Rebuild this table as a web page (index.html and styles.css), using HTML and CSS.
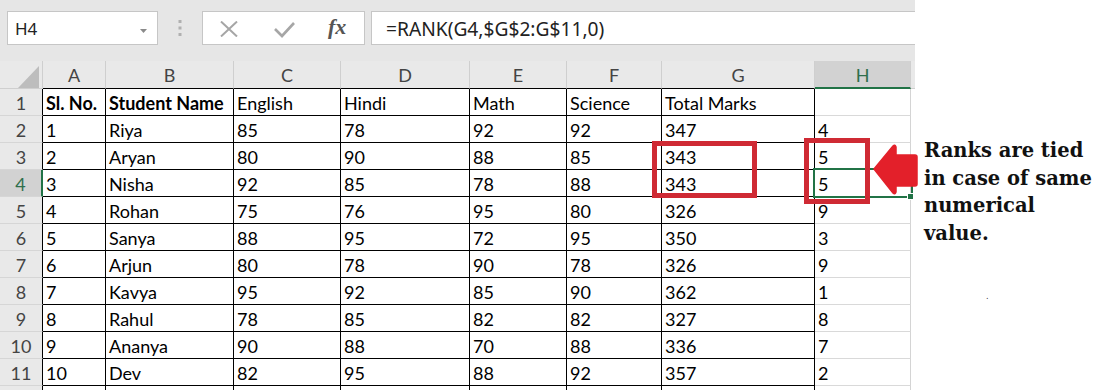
FILE: index.html
```html
<!DOCTYPE html>
<html>
<head>
<meta charset="utf-8">
<link rel="stylesheet" href="styles.css">
</head>
<body>
<div class="wrap">
  <div class="excel">
    <div class="fbar">
      <div class="namebox">
        <span class="nb-text">H4</span>
        <svg class="dd" width="7" height="4" viewBox="0 0 7 4"><path d="M0 0 L7 0 L3.5 4 Z" fill="#8a8a8a"/></svg>
      </div>
      <svg class="grip" width="4" height="18" viewBox="0 0 4 18">
        <rect x="0.5" y="1" width="3" height="3" fill="#b0b0b0"/>
        <rect x="0.5" y="7.5" width="3" height="3" fill="#b0b0b0"/>
        <rect x="0.5" y="14" width="3" height="3" fill="#b0b0b0"/>
      </svg>
      <div class="fxbox">
        <svg class="ico-x" width="18" height="16" viewBox="0 0 18 16"><path d="M1 0.5 L17 15.5 M17 0.5 L1 15.5" stroke="#a6a6a6" stroke-width="2" fill="none"/></svg>
        <svg class="ico-ok" width="21" height="16" viewBox="0 0 21 16"><path d="M1 7 L8 14 L20 1" stroke="#a6a6a6" stroke-width="2.6" fill="none"/></svg>
        <span class="fx">fx</span>
      </div>
      <div class="formula">=RANK(G4,$G$2:G$11,0)</div>
    </div>
    <div class="grid">
      <div class="corner"><div class="tri"></div></div>
      <div class="ch">A</div><div class="ch">B</div><div class="ch">C</div><div class="ch">D</div><div class="ch">E</div><div class="ch">F</div><div class="ch">G</div><div class="ch cur">H</div><div class="ch fill"></div>

      <div class="rh">1</div><div class="c b">Sl. No.</div><div class="c b">Student Name</div><div class="c">English</div><div class="c">Hindi</div><div class="c">Math</div><div class="c">Science</div><div class="c">Total Marks</div><div class="h"></div><div class="f"></div>
      <div class="rh">2</div><div class="c">1</div><div class="c">Riya</div><div class="c">85</div><div class="c">78</div><div class="c">92</div><div class="c">92</div><div class="c">347</div><div class="h">4</div><div class="f"></div>
      <div class="rh">3</div><div class="c">2</div><div class="c">Aryan</div><div class="c">80</div><div class="c">90</div><div class="c">88</div><div class="c">85</div><div class="c">343</div><div class="h">5</div><div class="f"></div>
      <div class="rh cur">4</div><div class="c">3</div><div class="c">Nisha</div><div class="c">92</div><div class="c">85</div><div class="c">78</div><div class="c">88</div><div class="c">343</div><div class="h">5</div><div class="f"></div>
      <div class="rh">5</div><div class="c">4</div><div class="c">Rohan</div><div class="c">75</div><div class="c">76</div><div class="c">95</div><div class="c">80</div><div class="c">326</div><div class="h">9</div><div class="f"></div>
      <div class="rh">6</div><div class="c">5</div><div class="c">Sanya</div><div class="c">88</div><div class="c">95</div><div class="c">72</div><div class="c">95</div><div class="c">350</div><div class="h">3</div><div class="f"></div>
      <div class="rh">7</div><div class="c">6</div><div class="c">Arjun</div><div class="c">80</div><div class="c">78</div><div class="c">90</div><div class="c">78</div><div class="c">326</div><div class="h">9</div><div class="f"></div>
      <div class="rh">8</div><div class="c">7</div><div class="c">Kavya</div><div class="c">95</div><div class="c">92</div><div class="c">85</div><div class="c">90</div><div class="c">362</div><div class="h">1</div><div class="f"></div>
      <div class="rh">9</div><div class="c">8</div><div class="c">Rahul</div><div class="c">78</div><div class="c">85</div><div class="c">82</div><div class="c">82</div><div class="c">327</div><div class="h">8</div><div class="f"></div>
      <div class="rh">10</div><div class="c">9</div><div class="c">Ananya</div><div class="c">90</div><div class="c">88</div><div class="c">70</div><div class="c">88</div><div class="c">336</div><div class="h">7</div><div class="f"></div>
      <div class="rh">11</div><div class="c">10</div><div class="c">Dev</div><div class="c">82</div><div class="c">95</div><div class="c">88</div><div class="c">92</div><div class="c">357</div><div class="h">2</div><div class="f"></div>
      <div class="rh"></div><div class="c"></div><div class="c"></div><div class="c"></div><div class="c"></div><div class="c"></div><div class="c"></div><div class="c"></div><div class="h"></div><div class="f"></div>
    </div>
  </div>
  <div class="note">
    <div class="line">Ranks are tied</div>
    <div class="line">in case of same</div>
    <div class="line">numerical</div>
    <div class="line">value.</div>
    <div class="speck">.</div>
  </div>

  <div class="selbox"></div>
  <div class="handle"></div>
  <div class="hl hl-g"></div>
  <div class="hl hl-h"></div>
  <svg class="arrow" width="50" height="58" viewBox="0 0 50 58">
    <path d="M4 29 L23 6 Q25 4 26 7 L26 15 L45 15 Q47 15 47 17 L47 44 Q47 46 45 46 L26 46 L26 52 Q25 55 23 53 Z" fill="#e3202a" stroke="#e3202a" stroke-width="1.5" stroke-linejoin="round"/>
  </svg>
</div>
</body>
</html>
```

FILE: styles.css
```css
* { box-sizing: border-box; }
html, body { margin: 0; padding: 0; background: #fff; }
body { width: 1103px; height: 390px; overflow: hidden; }

.wrap {
  position: relative;
  display: flex;
  width: 1103px;
  height: 390px;
}

.excel {
  width: 915px;
  height: 390px;
  flex: none;
  background: #e6e6e6;
  overflow: hidden;
  display: flex;
  flex-direction: column;
}

/* formula bar */
.fbar {
  height: 61px;
  flex: none;
  display: flex;
  align-items: flex-start;
  padding: 11px 0 0 7px;
}
.namebox {
  width: 151px;
  height: 34px;
  background: #fff;
  border: 1px solid #c6c6c6;
  display: flex;
  align-items: flex-start;
  justify-content: space-between;
  padding: 2px 10px 0 7px;
  font-family: "Noto Sans", sans-serif;
  font-size: 17px;
  line-height: 30px;
  color: #222;
}
.dd { margin-top: 15px; }
.grip { margin: 8px 0 0 20px; }
.fxbox {
  margin-left: 20px;
  width: 163px;
  height: 34px;
  background: #fff;
  border: 1px solid #c6c6c6;
  display: flex;
  align-items: flex-start;
  padding-left: 17px;
}
.ico-x { margin-top: 9px; }
.ico-ok { margin: 10px 0 0 36px; }
.fx {
  margin-left: 33px;
  font-family: "Liberation Serif", serif;
  font-style: italic;
  font-weight: bold;
  font-size: 22px;
  line-height: 30px;
  color: #555;
}
.formula {
  margin-left: 6px;
  flex: 1;
  margin-right: -3px;
  height: 34px;
  background: #fff;
  border: 1px solid #c6c6c6;
  padding: 1px 0 0 14px;
  font-family: "Noto Sans", sans-serif;
  font-size: 19.2px;
  line-height: 31px;
  color: #222;
  white-space: nowrap;
}

/* grid */
.grid {
  display: grid;
  grid-template-columns: 43px 63px 128px 107px 129px 97px 95px 153px 96px 4px;
  grid-template-rows: 28px repeat(12, 27px);
  background: #fff;
  font-family: Lato, sans-serif;
  font-size: 18px;
}
.grid > div {
  line-height: 25px;
  padding-top: 2px;
  white-space: nowrap;
  overflow: hidden;
}
.corner {
  background: #e9e9e9;
  border-right: 1px solid #cfcfcf;
  border-bottom: 1px solid #cfcfcf;
  display: flex;
  justify-content: flex-end;
  align-items: flex-end;
  padding: 0 3px 0 0;
}
.grid > .corner { padding-top: 0; }
.tri {
  width: 21px;
  height: 22px;
  background: #bdbdbd;
  clip-path: polygon(100% 0, 100% 100%, 0 100%);
}
.ch {
  background: #e9e9e9;
  border-right: 1px solid #cfcfcf;
  border-bottom: 1px solid #000;
  text-align: center;
  color: #444;
}
.ch.cur {
  background: #d2d2d2;
  color: #2f6f4c;
  border-bottom: 2px solid #217346;
}
.ch.fill { border-right: none; border-bottom: 1px solid #cfcfcf; }
.rh {
  background: #e9e9e9;
  border-right: 1px solid #000;
  border-bottom: 1px solid #d6d6d6;
  text-align: center;
  color: #444;
}
.rh.cur {
  background: #d2d2d2;
  color: #2f6f4c;
  border-right: 2px solid #217346;
}
.c {
  border-right: 1px solid #000;
  border-bottom: 1px solid #000;
  padding-left: 3px;
  color: #000;
}
.c.b { font-weight: bold; }
.h {
  border-right: 1px solid #d4d4d4;
  border-bottom: 1px solid #d9d9d9;
  padding-left: 3px;
  color: #000;
}
.f { background: #fff; }

/* annotation */
.note {
  flex: 1;
  background: #fff;
  padding: 137px 0 0 9px;
  font-family: "DejaVu Serif", serif;
  font-weight: bold;
  font-size: 19.5px;
  line-height: 27.7px;
  color: #111;
}
.line { white-space: nowrap; }
.speck {
  font-family: "DejaVu Sans", sans-serif;
  font-weight: normal;
  font-size: 8px;
  line-height: 10px;
  margin: 44px 0 0 62px;
  color: #333;
}

/* overlays */
.selbox {
  position: absolute;
  left: 813px;
  top: 168px;
  width: 100px;
  height: 30px;
  border: 2px solid #217346;
}
.handle {
  position: absolute;
  left: 907px;
  top: 193px;
  width: 7px;
  height: 7px;
  background: #217346;
  border: 1px solid #fff;
}
.hl {
  position: absolute;
  border: 5px solid #cf2a34;
}
.hl-g { left: 652px; top: 141px; width: 105px; height: 57px; }
.hl-h { left: 804px; top: 138px; width: 66px; height: 66px; }
.arrow {
  position: absolute;
  left: 870px;
  top: 140px;
}
```
